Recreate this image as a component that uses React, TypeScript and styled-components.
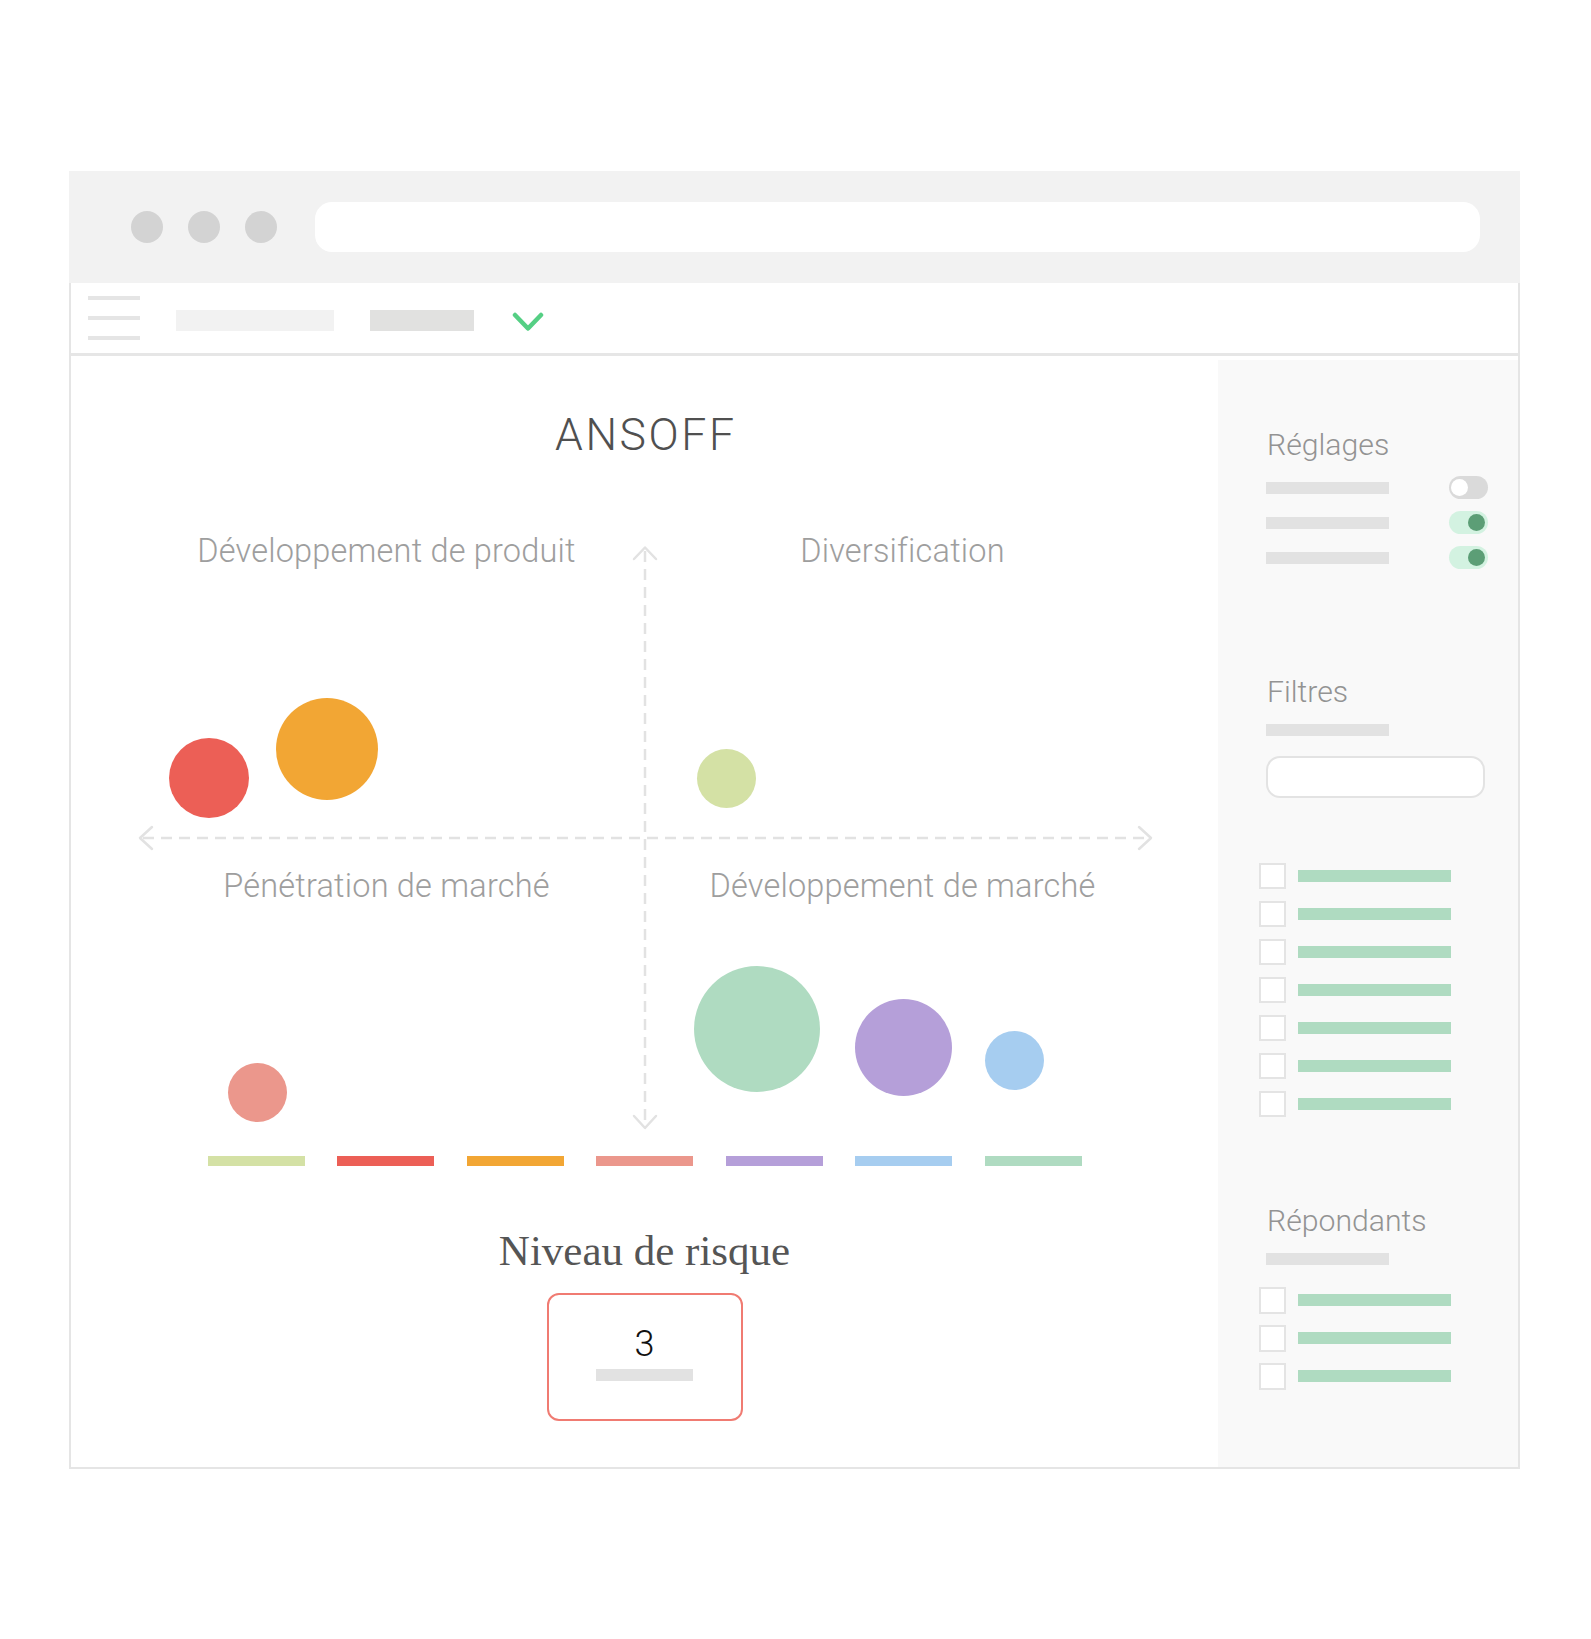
import React from "react";
import styled, { createGlobalStyle } from "styled-components";

const GlobalStyle = createGlobalStyle`
  html, body { margin: 0; padding: 0; background: #ffffff; }
  body { font-family: Roboto, "Liberation Sans", Arial, sans-serif; font-weight: 300; }
  * { box-sizing: border-box; }
`;

const Page = styled.div`
  padding: 171px 0 120px 69px;
`;

const Window = styled.div`
  width: 1451px;
  display: flex;
  flex-direction: column;
`;

const TitleBar = styled.div`
  height: 112px;
  background: #f2f2f2;
  display: flex;
  align-items: center;
  padding: 0 40px 0 62px;
`;

const Dot = styled.span`
  width: 32px;
  height: 32px;
  border-radius: 50%;
  background: #d3d3d3;
  flex: none;
  & + & { margin-left: 25px; }
`;

const AddressBar = styled.div`
  flex: 1;
  height: 50px;
  margin-left: 38px;
  border-radius: 17px;
  background: #ffffff;
`;

const Body = styled.div`
  border: 2px solid #e5e5e5;
  border-top: none;
  display: flex;
  flex-direction: column;
`;

const Nav = styled.div`
  height: 73px;
  border-bottom: 3px solid #e6e6e6;
  display: flex;
  align-items: center;
  gap: 36px;
  padding-left: 17px;
`;

const Hamburger = styled.div`
  width: 52px;
  display: flex;
  flex-direction: column;
  gap: 16px;
  & > span { display: block; height: 4px; background: #e5e5e5; }
`;

const NavBar = styled.div<{ $w: number; $c: string }>`
  width: ${(p) => p.$w}px;
  height: 21px;
  margin-top: 5px;
  background: ${(p) => p.$c};
`;

const Chevron = styled.svg`
  margin: 8px 0 0 2px;
  display: block;
`;

const Content = styled.div`
  display: flex;
  padding-top: 4px;
  min-height: 1111px;
`;

const Main = styled.div`
  flex: 1;
  display: flex;
  flex-direction: column;
  align-items: center;
  padding-top: 53px;
`;

const Title = styled.h1`
  margin: 0;
  padding-left: 2.6px;
  font-weight: 300;
  font-size: 44.5px;
  line-height: 44px;
  letter-spacing: 2.6px;
  color: #505050;
`;

const Chart = styled.div`
  position: relative;
  margin-top: 61px;
  width: 1032px;
  height: 632px;
  display: grid;
  grid-template-columns: 1fr 1fr;
  grid-template-rows: 320px 312px;
`;

const Axes = styled.svg`
  position: absolute;
  inset: 0;
  pointer-events: none;
`;

const Quadrant = styled.div<{ $pad: number }>`
  display: flex;
  justify-content: center;
  padding-top: ${(p) => p.$pad}px;
`;

const QuadLabel = styled.span`
  font-size: 32.5px;
  line-height: 32px;
  letter-spacing: 0.2px;
  color: #9e9e9e;
  white-space: nowrap;
`;

const Bubble = styled.span<{ $c: string }>`
  position: absolute;
  border-radius: 50%;
  background: ${(p) => p.$c};
`;

const Legend = styled.div`
  margin-top: 6px;
  display: flex;
  gap: 32.5px;
`;

const LegendBar = styled.span<{ $c: string }>`
  width: 97px;
  height: 10px;
  background: ${(p) => p.$c};
`;

const RiskTitle = styled.h2`
  margin: 63px 0 0;
  font-family: "Liberation Serif", "Times New Roman", serif;
  font-weight: 400;
  font-size: 43px;
  line-height: 43px;
  color: #555555;
`;

const RiskBox = styled.div`
  margin-top: 21px;
  width: 196px;
  height: 128px;
  border: 2px solid #f07b72;
  border-radius: 12px;
  display: flex;
  flex-direction: column;
  align-items: center;
  padding-top: 32px;
`;

const RiskValue = styled.span`
  font-size: 36px;
  line-height: 35px;
  color: #111111;
`;

const GreyBar = styled.span<{ $w: number; $mt?: number }>`
  display: block;
  width: ${(p) => p.$w}px;
  height: 12px;
  margin-top: ${(p) => p.$mt ?? 0}px;
  background: #e2e2e2;
`;

const Sidebar = styled.aside`
  width: 300px;
  flex: none;
  background: #f9f9f9;
  padding: 70px 30px 0 48px;
  display: flex;
  flex-direction: column;
`;

const Section = styled.section<{ $mt: number }>`
  margin-top: ${(p) => p.$mt}px;
  display: flex;
  flex-direction: column;
`;

const SideTitle = styled.h3`
  margin: 0;
  font-weight: 300;
  font-size: 30.2px;
  line-height: 29px;
  color: #939393;
  padding-left: 1px;
`;

const SettingsList = styled.div`
  margin-top: 17px;
  display: flex;
  flex-direction: column;
  gap: 12px;
`;

const SettingRow = styled.div`
  height: 23px;
  display: flex;
  align-items: center;
  justify-content: space-between;
`;

const Toggle = styled.span<{ $on: boolean }>`
  position: relative;
  width: 39px;
  height: 23px;
  border-radius: 12px;
  background: ${(p) => (p.$on ? "#d3f2e1" : "#dadada")};
  &::after {
    content: "";
    position: absolute;
    top: 3px;
    ${(p) => (p.$on ? "right: 3px;" : "left: 2px;")}
    width: 17px;
    height: 17px;
    border-radius: 50%;
    background: ${(p) => (p.$on ? "#5c9e76" : "#ffffff")};
  }
`;

const SearchInput = styled.div`
  margin-top: 20px;
  width: 219px;
  height: 42px;
  border: 2px solid #e3e3e3;
  border-radius: 14px;
  background: #ffffff;
`;

const CheckList = styled.div<{ $mt: number }>`
  margin-top: ${(p) => p.$mt}px;
  margin-left: -7px;
  display: flex;
  flex-direction: column;
  gap: 11.3px;
`;

const CheckRow = styled.div`
  display: flex;
  align-items: center;
  gap: 12.5px;
`;

const CheckBox = styled.span`
  width: 26.7px;
  height: 26.7px;
  border: 2px solid #e4e4e4;
  background: #ffffff;
  flex: none;
`;

const GreenBar = styled.span`
  width: 153px;
  height: 12px;
  background: #afdbc1;
`;

const bubbles = [
  { c: "#ec5f56", x: 40.7, y: 220, d: 80 },
  { c: "#f2a634", x: 147.6, y: 180, d: 102 },
  { c: "#d4e1a5", x: 568.3, y: 230.5, d: 59 },
  { c: "#eb978c", x: 99.5, y: 544.5, d: 59 },
  { c: "#afdbc1", x: 565, y: 448, d: 126 },
  { c: "#b59fd9", x: 726.5, y: 481, d: 97 },
  { c: "#a6cdf0", x: 856, y: 512.5, d: 59 },
];

const legend = ["#d4e1a5", "#ec5f56", "#f2a634", "#eb978c", "#b59fd9", "#a6cdf0", "#afdbc1"];

const Checks = ({ n, mt }: { n: number; mt: number }) => (
  <CheckList $mt={mt}>
    {Array.from({ length: n }).map((_, i) => (
      <CheckRow key={i}>
        <CheckBox />
        <GreenBar />
      </CheckRow>
    ))}
  </CheckList>
);

export default function App() {
  const ax = "#e2e2e2";
  return (
    <>
      <GlobalStyle />
      <Page>
        <Window>
          <TitleBar>
            <Dot />
            <Dot />
            <Dot />
            <AddressBar />
          </TitleBar>
          <Body>
            <Nav>
              <Hamburger>
                <span />
                <span />
                <span />
              </Hamburger>
              <NavBar $w={158} $c="#f2f2f2" />
              <NavBar $w={104} $c="#e1e1e0" />
              <Chevron width="32" height="20" viewBox="0 0 32 20">
                <polyline
                  points="3,3 16,16.5 29,3"
                  fill="none"
                  stroke="#55cf84"
                  strokeWidth="4.5"
                  strokeLinecap="round"
                  strokeLinejoin="round"
                />
              </Chevron>
            </Nav>
            <Content>
              <Main>
                <Title>ANSOFF</Title>
                <Chart>
                  <Axes width="1032" height="632" viewBox="0 0 1032 632">
                    <g fill="none" stroke={ax} strokeWidth="2.5" strokeLinecap="round" strokeLinejoin="round">
                      <line x1="14" y1="320" x2="1018" y2="320" strokeDasharray="11 7" strokeLinecap="butt" />
                      <line x1="516" y1="33" x2="516" y2="606" strokeDasharray="11 7" strokeLinecap="butt" />
                      <polyline points="23,309 11,320 23,331" />
                      <polyline points="1010,309 1022,320 1010,331" />
                      <polyline points="505,41 516,29.5 527,41" />
                      <polyline points="505,598 516,610 527,598" />
                    </g>
                  </Axes>
                  <Quadrant $pad={16.6}>
                    <QuadLabel>Développement de produit</QuadLabel>
                  </Quadrant>
                  <Quadrant $pad={16.6}>
                    <QuadLabel>Diversification</QuadLabel>
                  </Quadrant>
                  <Quadrant $pad={31.6}>
                    <QuadLabel>Pénétration de marché</QuadLabel>
                  </Quadrant>
                  <Quadrant $pad={31.6}>
                    <QuadLabel>Développement de marché</QuadLabel>
                  </Quadrant>
                  {bubbles.map((b, i) => (
                    <Bubble
                      key={i}
                      $c={b.c}
                      style={{ left: b.x, top: b.y, width: b.d, height: b.d }}
                    />
                  ))}
                </Chart>
                <Legend>
                  {legend.map((c) => (
                    <LegendBar key={c} $c={c} />
                  ))}
                </Legend>
                <RiskTitle>Niveau de risque</RiskTitle>
                <RiskBox>
                  <RiskValue>3</RiskValue>
                  <GreyBar $w={97} $mt={7} />
                </RiskBox>
              </Main>
              <Sidebar>
                <Section $mt={0}>
                  <SideTitle>Réglages</SideTitle>
                  <SettingsList>
                    {[false, true, true].map((on, i) => (
                      <SettingRow key={i}>
                        <GreyBar $w={123} />
                        <Toggle $on={on} />
                      </SettingRow>
                    ))}
                  </SettingsList>
                </Section>
                <Section $mt={108}>
                  <SideTitle>Filtres</SideTitle>
                  <GreyBar $w={123} $mt={18} />
                  <SearchInput />
                  <Checks n={7} mt={64.6} />
                </Section>
                <Section $mt={89}>
                  <SideTitle>Répondants</SideTitle>
                  <GreyBar $w={123} $mt={18} />
                  <Checks n={3} mt={21.7} />
                </Section>
              </Sidebar>
            </Content>
          </Body>
        </Window>
      </Page>
    </>
  );
}
